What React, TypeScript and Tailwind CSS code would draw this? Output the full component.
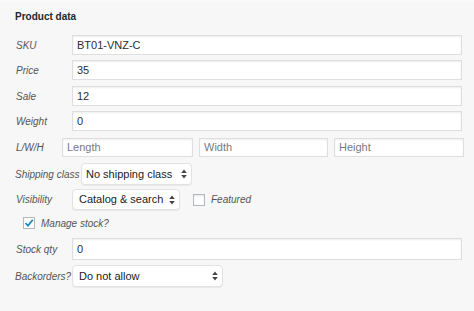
import React from "react";

function Arrows() {
  return (
    <svg width="6" height="10" viewBox="0 0 6 10" className="shrink-0" aria-hidden="true">
      <path d="M3 0.5 L5.8 4 H0.2 Z" fill="#444" />
      <path d="M3 9.5 L5.8 6 H0.2 Z" fill="#444" />
    </svg>
  );
}

function Label({ children, w }: { children: React.ReactNode; w: string }) {
  return (
    <span className={`${w} shrink-0 text-[10px] italic text-[#555]`}>{children}</span>
  );
}

function TextInput({ value, placeholder, w }: { value?: string; placeholder?: string; w: string }) {
  return (
    <div
      className={`${w} h-full flex items-center px-[4px] bg-white border border-[#dedede] shadow-[inset_0_1px_2px_rgba(0,0,0,0.07)] text-[11px] ${
        value ? "text-[#2a2e33]" : "text-[#7a7a7a]"
      }`}
    >
      {value ?? placeholder}
    </div>
  );
}

function Select({ value, w, pl }: { value: string; w: string; pl: string }) {
  return (
    <div
      className={`${w} ${pl} h-full flex items-center justify-between gap-[3px] pr-[4px] bg-white border border-[#e2e2e2] rounded-[4px] shadow-[0_1px_1px_rgba(0,0,0,0.06)] text-[11px] text-[#222]`}
    >
      <span className="whitespace-nowrap">{value}</span>
      <Arrows />
    </div>
  );
}

export default function App() {
  return (
    <div
      className="w-[474px] h-[311px] bg-[#f7f7f7] border-t-2 border-[#f9f9f9] overflow-hidden"
      style={{ fontFamily: '"Liberation Sans", Arial, sans-serif' }}
    >
      <div className="pl-[15px] pt-[9px]">
        <h3 className="text-[10px] font-bold text-[#23282d] leading-[12px]">Product data</h3>

        <div className="flex items-center h-[20px] mt-[12px]">
          <Label w="w-[57px] pl-[1px]">SKU</Label>
          <TextInput value="BT01-VNZ-C" w="w-[390px]" />
        </div>
        <div className="flex items-center h-[20px] mt-[5px]">
          <Label w="w-[57px] pl-[1px]">Price</Label>
          <TextInput value="35" w="w-[390px]" />
        </div>
        <div className="flex items-center h-[20px] mt-[6px]">
          <Label w="w-[57px] pl-[1px]">Sale</Label>
          <TextInput value="12" w="w-[390px]" />
        </div>
        <div className="flex items-center h-[20px] mt-[5px]">
          <Label w="w-[57px] pl-[1px]">Weight</Label>
          <TextInput value="0" w="w-[390px]" />
        </div>
        <div className="flex items-center h-[19px] mt-[7px] gap-[6px]">
          <Label w="w-[41px] pl-[1px]">L/W/H</Label>
          <TextInput placeholder="Length" w="w-[131px]" />
          <TextInput placeholder="Width" w="w-[129px]" />
          <TextInput placeholder="Height" w="w-[130px]" />
        </div>
        <div className="flex items-center h-[22px] mt-[6px]">
          <Label w="w-[66px]">Shipping class</Label>
          <Select value="No shipping class" w="w-[111px]" pl="pl-[4px] text-[10.5px]" />
        </div>
        <div className="flex items-center h-[21px] mt-[4px]">
          <Label w="w-[57px] pl-[1px]">Visibility</Label>
          <Select value="Catalog & search" w="w-[108px]" pl="pl-[6px]" />
          <div className="ml-[13px] w-[12px] h-[12px] bg-white border border-[#b4b9be] shadow-[inset_0_1px_2px_rgba(0,0,0,0.1)]" />
          <span className="ml-[6px] text-[10px] italic text-[#555]">Featured</span>
        </div>
        <div className="flex items-center h-[14px] mt-[6px] pl-[8px]">
          <div className="w-[12px] h-[12px] bg-white border border-[#b4b9be] flex items-center justify-center">
            <svg width="10" height="10" viewBox="0 0 10 10" aria-hidden="true">
              <path d="M1.5 5.2 L4 7.6 L8.8 1.8" fill="none" stroke="#1e8cbe" strokeWidth="1.8" />
            </svg>
          </div>
          <span className="ml-[6px] text-[10px] italic text-[#555]">Manage stock?</span>
        </div>
        <div className="flex items-center h-[22px] mt-[8px]">
          <Label w="w-[57px] pl-[1px]">Stock qty</Label>
          <TextInput value="0" w="w-[390px]" />
        </div>
        <div className="flex items-center h-[22px] mt-[5px]">
          <Label w="w-[57px]">Backorders?</Label>
          <Select value="Do not allow" w="w-[151px]" pl="pl-[6px]" />
        </div>
      </div>
    </div>
  );
}
